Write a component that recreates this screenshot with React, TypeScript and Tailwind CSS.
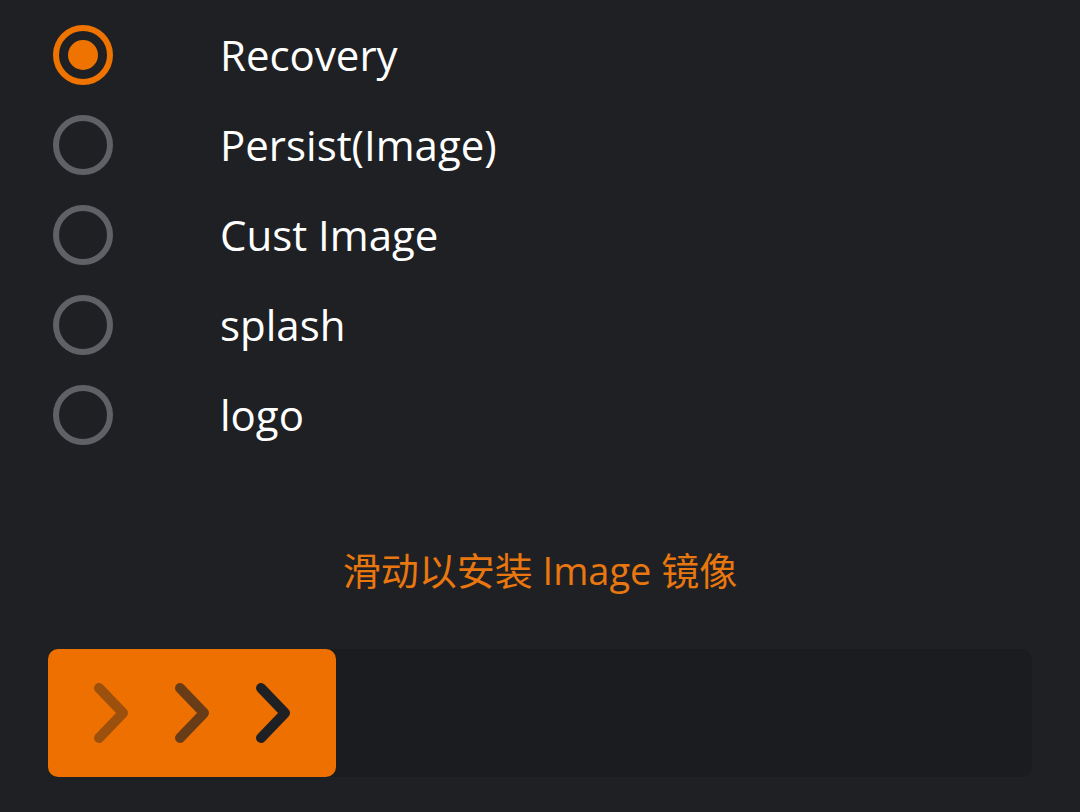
import React from 'react';

const options = ['Recovery', 'Persist(Image)', 'Cust Image', 'splash', 'logo'];

function Radio({ checked }: { checked: boolean }) {
  return (
    <span
      className={
        checked
          ? 'w-[60px] h-[60px] rounded-full border-[6px] border-[#ee7300] flex items-center justify-center shrink-0'
          : 'w-[60px] h-[60px] rounded-full border-[6px] border-[#5f6166] shrink-0'
      }
    >
      {checked && <span className="w-[30px] h-[30px] rounded-full bg-[#ee7300]"></span>}
    </span>
  );
}

function Chevron({ className }: { className: string }) {
  return (
    <svg width="44" height="70" viewBox="0 0 44 70" className={className}>
      <path d="M10 10 L34 35 L10 60" fill="none" stroke="currentColor" strokeWidth="10" strokeLinecap="round" strokeLinejoin="round" />
    </svg>
  );
}

export default function App() {
  return (
    <div
      className="w-[1080px] h-[812px] bg-[#1f2023] flex flex-col overflow-hidden"
      style={{ fontFamily: '"Open Sans", "Noto Sans CJK SC", sans-serif' }}
    >
      {/* Option list */}
      <div className="pt-[10px] pl-[53px] flex flex-col">
        {options.map((item, index) => (
          <div key={index} className="h-[90px] flex items-center">
            <Radio checked={index === 0} />
            <span className="ml-[107px] text-[42px] leading-none text-white">{item}</span>
          </div>
        ))}
      </div>

      {/* Hint */}
      <div className="mt-[88px] text-center text-[38px] leading-[44px] text-[#e9770f]">
        滑动以安装 Image 镜像
      </div>

      {/* Slider */}
      <div className="mt-[57px] mx-[48px] h-[128px] rounded-[10px] bg-[#1b1c1f] flex">
        <div className="w-[288px] h-full rounded-[10px] bg-[#ee7000] flex items-center pl-[41px] gap-[37px]">
          <Chevron className="text-[#1f2023]/40" />
          <Chevron className="text-[#1f2023]/65" />
          <Chevron className="text-[#1f2023]" />
        </div>
      </div>
    </div>
  );
}
